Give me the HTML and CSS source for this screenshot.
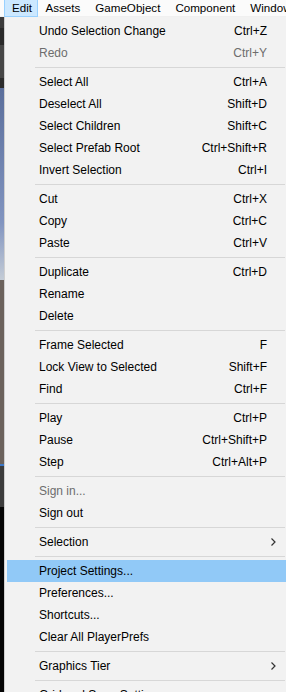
FILE: index.html
```html
<!DOCTYPE html>
<html>
<head>
<meta charset="utf-8">
<link rel="stylesheet" href="styles.css">
</head>
<body>
<div class="bar">
  <span class="bar-item active">Edit</span>
  <span class="bar-item">Assets</span>
  <span class="bar-item">GameObject</span>
  <span class="bar-item">Component</span>
  <span class="bar-item">Window</span>
</div>
<div class="main">
  <div class="scene">
    <div class="s s1"></div>
    <div class="s s2"></div>
    <div class="s s3"></div>
    <div class="s s4"></div>
    <div class="s sky"></div>
    <div class="s ground"></div>
    <div class="s line"></div>
    <div class="s panel"></div>
    <div class="s black"></div>
  </div>
  <div class="menu">
    <div class="row"><span>Undo Selection Change</span><span class="key">Ctrl+Z</span></div>
    <div class="row off"><span>Redo</span><span class="key">Ctrl+Y</span></div>
    <div class="sep"></div>
    <div class="row"><span>Select All</span><span class="key">Ctrl+A</span></div>
    <div class="row"><span>Deselect All</span><span class="key">Shift+D</span></div>
    <div class="row"><span>Select Children</span><span class="key">Shift+C</span></div>
    <div class="row"><span>Select Prefab Root</span><span class="key">Ctrl+Shift+R</span></div>
    <div class="row"><span>Invert Selection</span><span class="key">Ctrl+I</span></div>
    <div class="sep"></div>
    <div class="row"><span>Cut</span><span class="key">Ctrl+X</span></div>
    <div class="row"><span>Copy</span><span class="key">Ctrl+C</span></div>
    <div class="row"><span>Paste</span><span class="key">Ctrl+V</span></div>
    <div class="sep"></div>
    <div class="row"><span>Duplicate</span><span class="key">Ctrl+D</span></div>
    <div class="row"><span>Rename</span></div>
    <div class="row"><span>Delete</span></div>
    <div class="sep"></div>
    <div class="row"><span>Frame Selected</span><span class="key">F</span></div>
    <div class="row"><span>Lock View to Selected</span><span class="key">Shift+F</span></div>
    <div class="row"><span>Find</span><span class="key">Ctrl+F</span></div>
    <div class="sep"></div>
    <div class="row"><span>Play</span><span class="key">Ctrl+P</span></div>
    <div class="row"><span>Pause</span><span class="key">Ctrl+Shift+P</span></div>
    <div class="row"><span>Step</span><span class="key">Ctrl+Alt+P</span></div>
    <div class="sep"></div>
    <div class="row off"><span>Sign in...</span></div>
    <div class="row"><span>Sign out</span></div>
    <div class="sep"></div>
    <div class="row"><span>Selection</span><svg class="arrow" width="5" height="8" viewBox="0 0 5 8"><path d="M0.5 0.5 L4 4 L0.5 7.5" fill="none" stroke="#333" stroke-width="1.2"/></svg></div>
    <div class="sep"></div>
    <div class="row hl"><span>Project Settings...</span></div>
    <div class="row"><span>Preferences...</span></div>
    <div class="row"><span>Shortcuts...</span></div>
    <div class="row"><span>Clear All PlayerPrefs</span></div>
    <div class="sep"></div>
    <div class="row"><span>Graphics Tier</span><svg class="arrow" width="5" height="8" viewBox="0 0 5 8"><path d="M0.5 0.5 L4 4 L0.5 7.5" fill="none" stroke="#333" stroke-width="1.2"/></svg></div>
    <div class="sep"></div>
    <div class="row"><span>Grid and Snap Settings...</span></div>
  </div>
</div>
</body>
</html>
```

FILE: styles.css
```css
html, body {
  margin: 0;
  padding: 0;
}
body {
  width: 286px;
  height: 692px;
  overflow: hidden;
  background: #f0f0f0;
  font-family: "Liberation Sans", Arial, sans-serif;
  font-size: 12px;
  color: #000;
}
.bar {
  height: 17px;
  background: #fbfbfb;
  display: flex;
  align-items: stretch;
  white-space: nowrap;
  padding-left: 4px;
  box-sizing: border-box;
  border-bottom: 1px solid #f0f0f0;
  font-size: 11.6px;
}
.bar-item {
  line-height: 16px;
  padding: 0 7.5px;
}
.bar-item.active {
  background: #cce8ff;
  border: 1px solid #99d1ff;
  border-top: none;
  padding: 0 7px;
  line-height: 16px;
  box-sizing: border-box;
  height: 17px;
  width: 34px;
}
.main {
  display: flex;
  height: 675px;
}
.scene {
  width: 4px;
  flex: none;
  display: flex;
  flex-direction: column;
}
.s { flex: none; }
.s1 { height: 11px; background: #3b3b3b; }
.s2 { height: 17px; background: #2a2a2a; }
.s3 { height: 33px; background: #464646; }
.s4 { height: 10px; background: #2c2c2c; }
.sky { height: 192px; background: linear-gradient(#5b6f9c, #8194c0 70%, #c4ccd6); }
.ground { height: 184px; background: #6b625c; }
.line { height: 2px; background: #3c78c8; }
.panel { height: 41px; background: #3c3c3c; }
.black { flex: 1; background: #050505; }
.menu {
  flex: 1;
  background: #f2f2f2;
  border-left: 1px solid #cfcfcf;
  padding: 3px 0 0 2px;
  white-space: nowrap;
}
.row {
  height: 22px;
  display: flex;
  align-items: center;
  padding: 0 19px 0 32px;
  line-height: 22px;
}
.row span:first-child { flex: 1; }
.key { text-align: right; }
.off { color: #6d6d6d; }
.hl { background: #91c9f7; }
.arrow {
  margin-right: -9px;
  display: block;
}
.sep {
  height: 7px;
  margin-left: 28px;
  margin-right: 1px;
  display: flex;
  align-items: center;
}
.sep::before {
  content: "";
  display: block;
  height: 1px;
  width: 100%;
  background: #d7d7d7;
}
```
